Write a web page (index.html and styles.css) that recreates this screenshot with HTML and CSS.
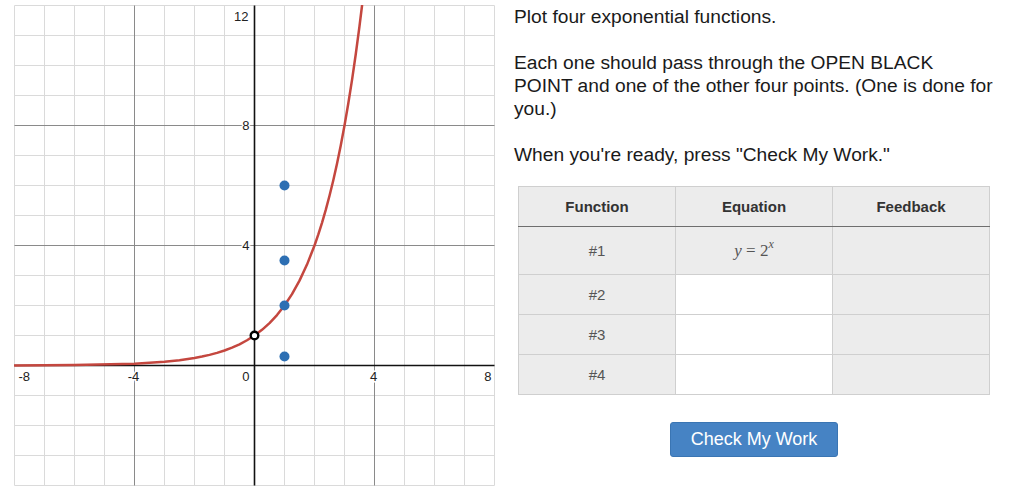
FILE: index.html
```html
<!DOCTYPE html>
<html>
<head>
<meta charset="utf-8">
<link rel="stylesheet" href="styles.css">
</head>
<body>
<div class="page">
  <div class="graph">
    <svg width="482" height="482" viewBox="0 0 482 482" xmlns="http://www.w3.org/2000/svg">
      <g transform="translate(0.5,0.5)">
        <g class="minor">
          <path d="M30 0V480M60 0V480M90 0V480M150 0V480M180 0V480M210 0V480M270 0V480M300 0V480M330 0V480M390 0V480M420 0V480M450 0V480"/>
          <path d="M0 30H480M0 60H480M0 90H480M0 150H480M0 180H480M0 210H480M0 270H480M0 300H480M0 330H480M0 390H480M0 420H480M0 450H480"/>
          <path d="M0 0V480M480 0V480M0 0H480M0 480H480"/>
        </g>
        <g class="major">
          <path d="M120 0V480M360 0V480M0 120H480M0 240H480"/>
        </g>
        <g class="axis">
          <path d="M240 0V480M0 360H480"/>
        </g>
        <g class="labels">
          <text x="234" y="15" text-anchor="end">12</text>
          <text x="235" y="124" text-anchor="end">8</text>
          <text x="235" y="244" text-anchor="end">4</text>
          <text x="235" y="375" text-anchor="end">0</text>
          <text x="4" y="375">-8</text>
          <text x="119" y="375" text-anchor="middle">-4</text>
          <text x="359" y="375" text-anchor="middle">4</text>
          <text x="477" y="375" text-anchor="end">8</text>
        </g>
        <polyline class="curve" points="0,359.88 60,359.53 120,358.13 150,356.25 165,354.7 180,352.5 187.5,351.08 195,349.39 202.5,347.39 210,345 217.5,342.16 225,338.79 232.5,334.77 240,330 247.5,324.32 255,317.57 262.5,309.55 270,300 277.5,288.65 285,275.15 292.5,259.09 300,240 303.75,229.14 307.5,217.29 311.25,204.38 315,190.29 318.75,174.94 322.5,158.18 326.25,139.91 330,120 333.75,98.27 337.5,74.58 341.25,48.76 345,20.59 347.55,0"/>
        <g class="dots">
          <circle cx="270" cy="180" r="5"/>
          <circle cx="270" cy="255" r="5"/>
          <circle cx="270" cy="300" r="5"/>
          <circle cx="270" cy="351" r="5"/>
        </g>
        <circle class="open" cx="240" cy="330" r="3.8"/>
      </g>
    </svg>
  </div>
  <div class="panel">
    <p class="instructions">Plot four exponential functions.<br><br>Each one should pass through the OPEN BLACK POINT and one of the other four points. (One is done for you.)<br><br>When you're ready, press "Check My Work."</p>
    <table class="work">
      <thead>
        <tr><th>Function</th><th>Equation</th><th>Feedback</th></tr>
      </thead>
      <tbody>
        <tr class="first"><td>#1</td><td class="eq done"><span class="math"><i>y</i> = 2<sup><i>x</i></sup></span></td><td></td></tr>
        <tr><td>#2</td><td class="eq"></td><td></td></tr>
        <tr><td>#3</td><td class="eq"></td><td></td></tr>
        <tr><td>#4</td><td class="eq"></td><td></td></tr>
      </tbody>
    </table>
    <div class="actions">
      <button class="check">Check My Work</button>
    </div>
  </div>
</div>
</body>
</html>
```

FILE: styles.css
```css
html, body {
  margin: 0;
  padding: 0;
  background: #ffffff;
}

body {
  font-family: "Liberation Sans", Arial, sans-serif;
  color: #222;
}

.page {
  display: flex;
  align-items: flex-start;
  padding-top: 5px;
}

.graph {
  margin-left: 14px;
  width: 482px;
  height: 482px;
  flex: none;
}

.graph svg {
  display: block;
}

.minor path {
  stroke: #dadada;
  stroke-width: 1;
  fill: none;
}

.major path {
  stroke: #8a8a8a;
  stroke-width: 1;
  fill: none;
}

.axis path {
  stroke: #111;
  stroke-width: 1.6;
  fill: none;
}

.labels text {
  font-family: "Liberation Sans", Arial, sans-serif;
  font-size: 13px;
  fill: #222;
  stroke: #fff;
  stroke-width: 3px;
  paint-order: stroke;
}

.curve {
  fill: none;
  stroke: #c4473f;
  stroke-width: 2.5;
  stroke-linejoin: round;
  stroke-linecap: round;
}

.dots circle {
  fill: #2d6fb3;
}

.open {
  fill: #fff;
  stroke: #000;
  stroke-width: 2.4;
}

.panel {
  margin-left: 18px;
  width: 482px;
  flex: none;
}

.instructions {
  margin: 0;
  width: 480px;
  font-size: 19.2px;
  line-height: 23px;
  color: #1a1a1a;
}

.work {
  margin: 20px 0 0 4px;
  width: 472px;
  border-collapse: collapse;
  table-layout: fixed;
  font-size: 15px;
}

.work th,
.work td {
  background: #ececec;
  text-align: center;
  border: 1px solid #cfcfcf;
  padding: 0;
}

.work th {
  height: 39px;
  font-weight: bold;
  color: #333;
  border-bottom: 1px solid #6e6e6e;
}

.work td {
  height: 39px;
  color: #555;
}

.work tr.first td {
  height: 47px;
}

.work th + th,
.work td + td {
  border-left: 1px solid #555;
}

.work td.eq {
  background: #fff;
}

.work td.eq.done {
  background: #ececec;
}

.math {
  font-family: "Liberation Serif", "Times New Roman", serif;
  font-size: 17px;
  color: #555;
}

.math sup {
  font-size: 12px;
  vertical-align: 8px;
  line-height: 0;
}

.actions {
  display: flex;
  justify-content: center;
  padding-left: 4px;
  width: 472px;
  margin-top: 27px;
}

.check {
  width: 168px;
  height: 35px;
  background: #4683c4;
  border: 1px solid #3a75b3;
  border-radius: 3px;
  color: #fff;
  font-family: "Liberation Sans", Arial, sans-serif;
  font-size: 18px;
  padding: 0;
}
```
